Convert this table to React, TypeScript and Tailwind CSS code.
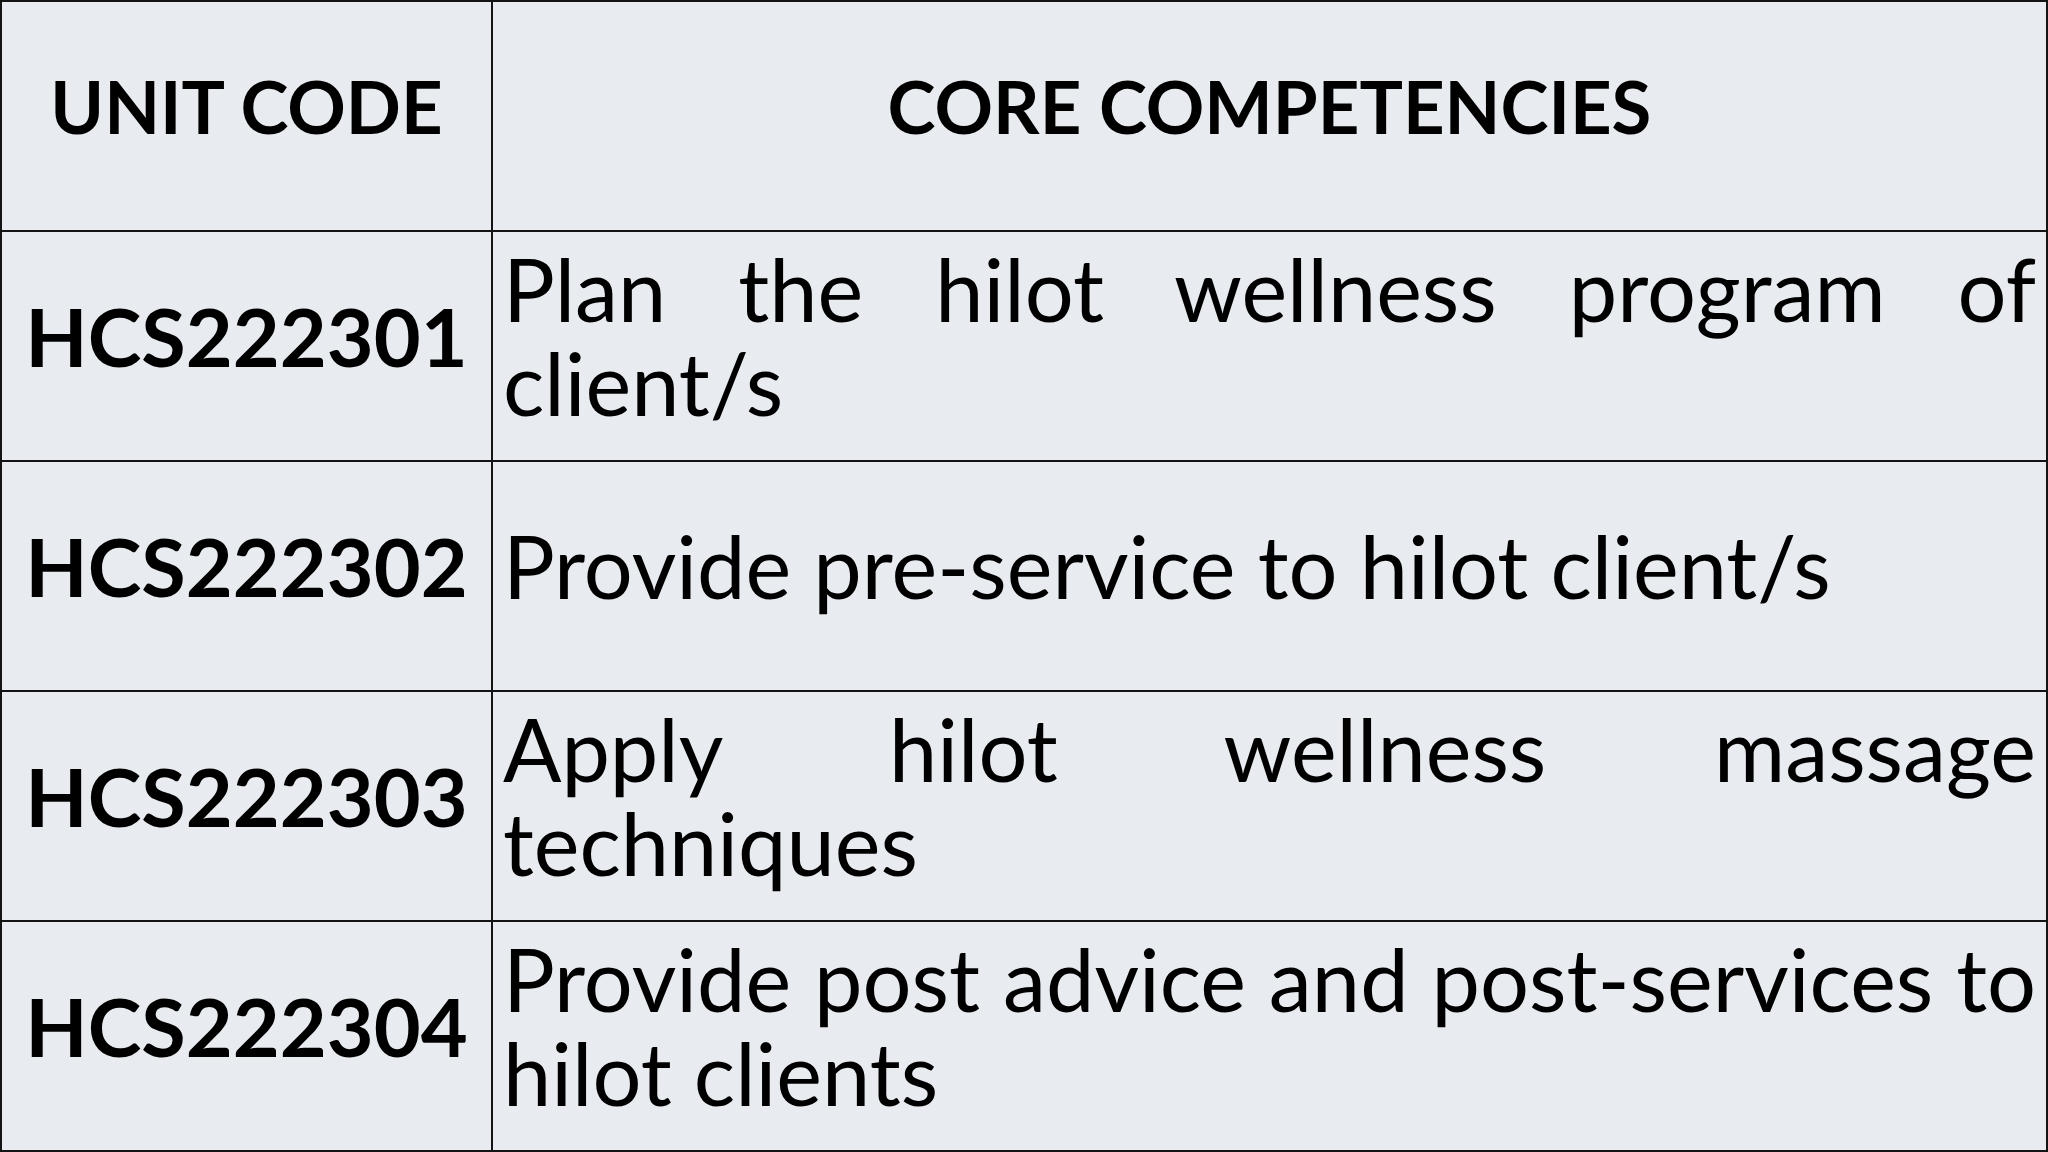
import React from "react";

const rows = [
  { code: "HCS222301", text: "Plan the hilot wellness program of client/s" },
  { code: "HCS222302", text: "Provide pre-service to hilot client/s" },
  { code: "HCS222303", text: "Apply hilot wellness massage techniques" },
  { code: "HCS222304", text: "Provide post advice and post-services to hilot clients" },
];

export default function App() {
  return (
    <div
      className="w-[2048px] h-[1152px] bg-[#141414] border-2 border-[#141414] grid grid-cols-[489px_1fr] grid-rows-5 gap-[2px] text-black overflow-hidden"
      style={{ fontFamily: "Lato, 'Noto Sans', sans-serif" }}
    >
      <div className="bg-[#e8ebf0] flex items-center justify-center pb-[20px]">
        <span className="font-bold text-[72.5px] leading-[92px]">UNIT CODE</span>
      </div>
      <div className="bg-[#e8ebf0] flex items-center justify-center pb-[20px]">
        <span className="font-bold text-[72.5px] leading-[92px]">CORE COMPETENCIES</span>
      </div>
      {rows.map((r) => (
        <React.Fragment key={r.code}>
          <div className="bg-[#e8ebf0] flex items-center justify-center pb-[20px]">
            <span className="font-bold text-[81px] leading-[92px]">{r.code}</span>
          </div>
          <div className="bg-[#e8ebf0] flex items-center px-[10px] pb-[20px]">
            <p className="w-full text-justify text-[86.5px] leading-[94px]">{r.text}</p>
          </div>
        </React.Fragment>
      ))}
    </div>
  );
}
